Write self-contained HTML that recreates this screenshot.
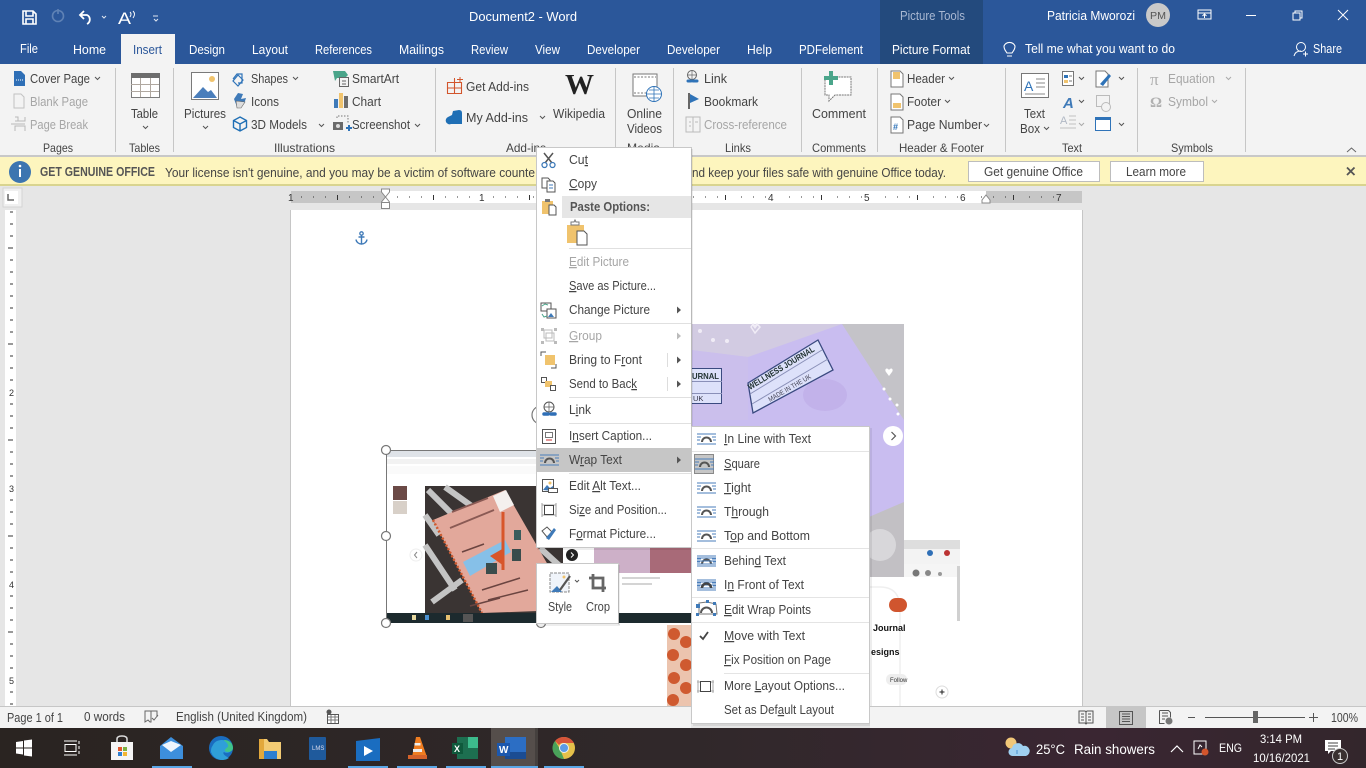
<!DOCTYPE html>
<html lang="en"><head><meta charset="utf-8"><title>Document2 - Word</title>
<style>
html,body{margin:0;padding:0;width:1366px;height:768px;overflow:hidden;background:#e6e6e6}
svg{display:block;font-family:"Liberation Sans",sans-serif;font-size:12.5px}
text{fill:#444}
.w text,text.w{fill:#fff}
.g text,text.g{fill:#a6a6a6}
.u{text-decoration:underline}
</style></head><body>
<svg width="1366" height="768" viewBox="0 0 1366 768" xmlns="http://www.w3.org/2000/svg">
<defs>
<linearGradient id="tb" x1="0" x2="1" y1="0" y2="0"><stop offset="0" stop-color="#2a2421"/><stop offset=".5" stop-color="#30282a"/><stop offset=".8" stop-color="#3a2632"/><stop offset="1" stop-color="#33262c"/></linearGradient>
<g id="wrap"><path d="M0 1h19M0 11h19" stroke="#4a7ebb" fill="none"/><path d="M0 4h4M15 4h4M0 7h3M16 7h3" stroke="#4a7ebb" fill="none"/><path d="M5 9a4.500 4.500 0 0 1 9 0" fill="none" stroke="#555" stroke-width="2"/></g>
</defs>

<!-- title bar -->
<rect width="1366" height="64" fill="#2b579a"/>
<rect x="880" width="103" height="64" fill="#234a7d"/>
<rect x="121" y="34" width="54" height="30" fill="#f3f3f3"/>
<path d="M23 11h10l3 3v10H23z M26 11v5h7v-5 M26 24v-5h7v5" fill="none" stroke="#fff" stroke-width="1.600"/>
<circle cx="58" cy="16" r="5.500" fill="none" stroke="#5f82b5" stroke-width="1.600"/><path d="M58 9v5" stroke="#5f82b5" stroke-width="1.600"/>
<path d="M84 11l-4 4 4 4M80 15h7a5 5 0 0 1 0 9" fill="none" stroke="#fff" stroke-width="1.800"/>
<path d="M102 16l2 2 2-2M153 16h5M154 19l2 2 2-2" fill="none" stroke="#dfe6f0"/>
<g class="w">
<text x="118" y="24" font-size="17" textLength="13" lengthAdjust="spacingAndGlyphs">A</text>
<path d="M130 12q2 2 0 5M133 11q3 3 0 7" fill="none" stroke="#fff"/>
<text x="469" y="21" textLength="108" lengthAdjust="spacingAndGlyphs">Document2  -  Word</text>
<text x="1047" y="20" textLength="88" lengthAdjust="spacingAndGlyphs">Patricia Mworozi</text>
<text x="20" y="53" textLength="18" lengthAdjust="spacingAndGlyphs">File</text>
<text x="73" y="54" textLength="33" lengthAdjust="spacingAndGlyphs">Home</text>
<text x="189" y="54" textLength="36" lengthAdjust="spacingAndGlyphs">Design</text>
<text x="252" y="54" textLength="36" lengthAdjust="spacingAndGlyphs">Layout</text>
<text x="315" y="54" textLength="57" lengthAdjust="spacingAndGlyphs">References</text>
<text x="399" y="54" textLength="45" lengthAdjust="spacingAndGlyphs">Mailings</text>
<text x="471" y="54" textLength="37" lengthAdjust="spacingAndGlyphs">Review</text>
<text x="535" y="54" textLength="25" lengthAdjust="spacingAndGlyphs">View</text>
<text x="587" y="54" textLength="53" lengthAdjust="spacingAndGlyphs">Developer</text>
<text x="667" y="54" textLength="53" lengthAdjust="spacingAndGlyphs">Developer</text>
<text x="747" y="54" textLength="25" lengthAdjust="spacingAndGlyphs">Help</text>
<text x="799" y="54" textLength="64" lengthAdjust="spacingAndGlyphs">PDFelement</text>
<text x="892" y="54" textLength="78" lengthAdjust="spacingAndGlyphs">Picture Format</text>
<text x="1025" y="53" textLength="150" lengthAdjust="spacingAndGlyphs">Tell me what you want to do</text>
<text x="1313" y="53" textLength="29" lengthAdjust="spacingAndGlyphs">Share</text>
</g>
<text x="133" y="54" textLength="29" lengthAdjust="spacingAndGlyphs" style="fill:#2b579a">Insert</text>
<text x="900" y="20" textLength="65" lengthAdjust="spacingAndGlyphs" style="fill:#a9b8d2">Picture Tools</text>
<circle cx="1158" cy="15" r="12" fill="#c9c9c9"/><text x="1150" y="19" font-size="10.500" textLength="16" lengthAdjust="spacingAndGlyphs" style="fill:#555">PM</text>
<path d="M1198 10h13v9h-13zM1198 13h13M1204.500 18v-4M1202.500 16l2-2 2 2" fill="none" stroke="#fff"/>
<path d="M1246 15.500h10" stroke="#fff"/>
<path d="M1293 13h7v7h-7zM1295 13v-2h7v7h-2" fill="none" stroke="#fff"/>
<path d="M1338 10l10 10M1348 10l-10 10" stroke="#fff"/>
<path d="M1007 53c-1-2-3-3-3-7a6 6 0 0 1 11 0c0 4-2 5-3 7zM1007 56h5" fill="none" stroke="#fff" stroke-width="1.100"/>
<circle cx="1301" cy="47" r="4.500" fill="none" stroke="#fff"/><path d="M1294 56c1-4 4-5 7-5M1303 54h5M1305.500 51.500v5" fill="none" stroke="#fff"/>

<!-- ribbon -->
<rect y="64" width="1366" height="92" fill="#f3f3f3"/>
<rect y="155" width="1366" height="2" fill="#c8c8c8"/>
<g stroke="#c6c6c6"><path d="M115.500 68v84M173.500 68v84M435.500 68v84M615.500 68v84M673.500 68v84M801.500 68v84M877.500 68v84M1005.500 68v84M1137.500 68v84M1245.500 68v84"/></g>
<g>
<text x="30" y="83" textLength="60" lengthAdjust="spacingAndGlyphs">Cover Page</text>
<text x="131" y="118" textLength="27" lengthAdjust="spacingAndGlyphs">Table</text>
<text x="184" y="118" textLength="42" lengthAdjust="spacingAndGlyphs">Pictures</text>
<text x="251" y="83" textLength="37" lengthAdjust="spacingAndGlyphs">Shapes</text>
<text x="251" y="106" textLength="28" lengthAdjust="spacingAndGlyphs">Icons</text>
<text x="251" y="129" textLength="56" lengthAdjust="spacingAndGlyphs">3D Models</text>
<text x="352" y="83" textLength="47" lengthAdjust="spacingAndGlyphs">SmartArt</text>
<text x="352" y="106" textLength="29" lengthAdjust="spacingAndGlyphs">Chart</text>
<text x="352" y="129" textLength="58" lengthAdjust="spacingAndGlyphs">Screenshot</text>
<text x="466" y="91" textLength="63" lengthAdjust="spacingAndGlyphs">Get Add-ins</text>
<text x="466" y="122" textLength="62" lengthAdjust="spacingAndGlyphs">My Add-ins</text>
<text x="553" y="118" textLength="52" lengthAdjust="spacingAndGlyphs">Wikipedia</text>
<text x="627" y="118" textLength="35" lengthAdjust="spacingAndGlyphs">Online</text>
<text x="627" y="133" textLength="35" lengthAdjust="spacingAndGlyphs">Videos</text>
<text x="704" y="83" textLength="23" lengthAdjust="spacingAndGlyphs">Link</text>
<text x="704" y="106" textLength="54" lengthAdjust="spacingAndGlyphs">Bookmark</text>
<text x="812" y="118" textLength="54" lengthAdjust="spacingAndGlyphs">Comment</text>
<text x="907" y="83" textLength="38" lengthAdjust="spacingAndGlyphs">Header</text>
<text x="907" y="106" textLength="34" lengthAdjust="spacingAndGlyphs">Footer</text>
<text x="907" y="129" textLength="75" lengthAdjust="spacingAndGlyphs">Page Number</text>
<text x="1024" y="118" textLength="21" lengthAdjust="spacingAndGlyphs">Text</text>
<text x="1020" y="133" textLength="20" lengthAdjust="spacingAndGlyphs">Box</text>
</g>
<g class="g">
<text x="30" y="106" textLength="58" lengthAdjust="spacingAndGlyphs">Blank Page</text>
<text x="30" y="129" textLength="58" lengthAdjust="spacingAndGlyphs">Page Break</text>
<text x="704" y="129" textLength="83" lengthAdjust="spacingAndGlyphs">Cross-reference</text>
<text x="1168" y="83" textLength="47" lengthAdjust="spacingAndGlyphs">Equation</text>
<text x="1168" y="106" textLength="40" lengthAdjust="spacingAndGlyphs">Symbol</text>
</g>
<g font-size="12">
<text x="43" y="152" textLength="30" lengthAdjust="spacingAndGlyphs">Pages</text>
<text x="129" y="152" textLength="31" lengthAdjust="spacingAndGlyphs">Tables</text>
<text x="274" y="152" textLength="61" lengthAdjust="spacingAndGlyphs">Illustrations</text>
<text x="506" y="152" textLength="40" lengthAdjust="spacingAndGlyphs">Add-ins</text>
<text x="627" y="152" textLength="33" lengthAdjust="spacingAndGlyphs">Media</text>
<text x="725" y="152" textLength="26" lengthAdjust="spacingAndGlyphs">Links</text>
<text x="812" y="152" textLength="54" lengthAdjust="spacingAndGlyphs">Comments</text>
<text x="899" y="152" textLength="85" lengthAdjust="spacingAndGlyphs">Header &amp; Footer</text>
<text x="1062" y="152" textLength="20" lengthAdjust="spacingAndGlyphs">Text</text>
<text x="1171" y="152" textLength="42" lengthAdjust="spacingAndGlyphs">Symbols</text>
</g>
<!-- ribbon chevrons -->
<path d="M95 77l2.500 2.500 2.500-2.500M143 126l2.500 2.500 2.500-2.500M203 126l2.500 2.500 2.500-2.500M293 77l2.500 2.500 2.500-2.500M319 124l2.500 2.500 2.500-2.500M415 124l2.500 2.500 2.500-2.500M540 116l2.500 2.500 2.500-2.500M949 77l2.500 2.500 2.500-2.500M945 100l2.500 2.500 2.500-2.500M984 124l2.500 2.500 2.500-2.500M1044 127l2.500 2.500 2.500-2.500M1079 77l2.500 2.500 2.500-2.500M1079 100l2.500 2.500 2.500-2.500M1119 77l2.500 2.500 2.500-2.500M1119 123l2.500 2.500 2.500-2.500" fill="none" stroke="#555"/>
<path d="M1079 123l2.500 2.500 2.500-2.500M1226 77l2.500 2.500 2.500-2.500M1212 100l2.500 2.500 2.500-2.500" fill="none" stroke="#aaa"/>
<path d="M1347 152l4.500-4 4.500 4" fill="none" stroke="#666"/>
<!-- ribbon icons -->
<path d="M14 71h7l4 4v11H14z" fill="#2f6fb6"/><path d="M16 80h7" stroke="#fff" stroke-dasharray="1 1"/>
<path d="M14 94h7l3 3v11H14z" fill="#f3f3f3" stroke="#c2c2c2"/>
<path d="M15 117h3v4M25 117v4h-10M25 131v-5H15v5M11 124h14" fill="none" stroke="#b8b8b8"/>
<rect x="131.500" y="73.500" width="28" height="24" fill="#fff" stroke="#7c7c7c"/><rect x="131" y="73" width="29" height="5" fill="#6d6d6d"/>
<path d="M131 84.500h28M131 91.500h28M140.500 78v19M150.500 78v19" stroke="#b0a8a0"/>
<rect x="191.500" y="72.500" width="27" height="27" fill="#fff" stroke="#7a7a7a"/>
<circle cx="212" cy="79" r="3" fill="#f0c36d"/><path d="M193 98l10-11 5 5 3-2 6 8z" fill="#4a7ebb"/>
<path d="M233 79l4-5 5 0v9h-4M238 75l5 5-5 6-5-5z" fill="none" stroke="#2f73b8" stroke-width="1.200"/>
<path d="M234 99l4-6 5 1-2 5 5-1-2 6-7 3z" fill="#3f7ab8"/><path d="M236 101l9 1-4 6h-4z" fill="#ddd" stroke="#666" stroke-width=".6"/>
<path d="M240 117l6.500 3.500v7L240 131l-6.500-3.500v-7zM233.500 120.500L240 124l6.500-3.500M240 124v7" fill="none" stroke="#1f6fb5" stroke-width="1.400"/>
<path d="M333 71h12l3 4-3 3h-8l-2 3z" fill="#4aa58a"/><rect x="339.500" y="77.500" width="9" height="9" fill="#f3f3f3" stroke="#666"/><path d="M342 81h4M342 84h4" stroke="#666"/>
<rect x="334" y="99" width="4" height="9" fill="#3f7ab8"/><rect x="339" y="93" width="4" height="15" fill="#f0c36d"/><rect x="344" y="96" width="4" height="12" fill="#6d6d6d"/>
<path d="M337 118v-2h11v7" fill="none" stroke="#777" stroke-dasharray="1.500 1.500"/><rect x="333" y="122" width="10" height="8" fill="#6a6a6a"/><circle cx="338" cy="126" r="2" fill="#ddd"/><path d="M346 128h6M349 125v6" stroke="#2f73b8" stroke-width="2"/>
<path d="M447.500 82.500h14v11h-14zM454.500 79v15M447.500 88h14" fill="none" stroke="#d2552c" stroke-width="1.100"/><path d="M457 79.500h6M460 77v5.500" stroke="#d2552c"/><rect x="454" y="78" width="1" height="4" fill="#d2552c"/>
<path d="M448 117l4-2 1-4 6-1q3 0 3 3v11h-11a3.500 3.500 0 0 1-3-7z" fill="#1f6fb5"/>
<text x="565" y="94" font-size="29" font-weight="bold" textLength="29" lengthAdjust="spacingAndGlyphs" style="fill:#222;font-family:'Liberation Serif',serif">W</text>
<rect x="633" y="74" width="24" height="22" fill="#fff" stroke="#777"/><path d="M634 77h22M634 93h22" stroke="#777" stroke-dasharray="2 1.500"/>
<circle cx="654" cy="94" r="7.500" fill="#fff" stroke="#2f73b8"/><path d="M647 94h15M654 87v15M649 90h10M649 98h10" stroke="#2f73b8" stroke-width=".8"/>
<circle cx="692" cy="75" r="4.500" fill="none" stroke="#666"/><path d="M687 75h10M692 71v8" stroke="#666" stroke-width=".7"/><path d="M688 81h3M693 81h4" stroke="#2f73b8" stroke-width="3" stroke-linecap="round"/>
<path d="M689 93v16" stroke="#666" stroke-width="2"/><path d="M690 94l9 5-9 4z" fill="#2f73b8"/>
<rect x="686" y="117" width="14" height="15" fill="none" stroke="#bbb"/><path d="M693 117v15M689 122h2M689 126h2M695 122h3" stroke="#bbb"/>
<path d="M825 77h26v18h-16l-6 6v-6h-4z" fill="#fff" stroke="#777" stroke-dasharray="2 .7"/><path d="M829 71h4v5h5v4h-5v5h-4v-5h-5v-4h5z" fill="#4aa58a"/>
<path d="M891 71h9l3 3v13h-12z" fill="#fff" stroke="#777"/><rect x="893" y="72" width="7" height="7" fill="#f0c36d"/>
<path d="M891 94h9l3 3v13h-12z" fill="#fff" stroke="#777"/><rect x="893" y="103" width="8" height="5" fill="#f0c36d"/>
<path d="M891 117h9l3 3v13h-12z" fill="#fff" stroke="#777"/><text x="893" y="130" font-size="9" style="fill:#2f73b8;font-weight:bold">#</text>
<rect x="1021.500" y="73.500" width="27" height="24" fill="#fff" stroke="#777"/><text x="1024" y="91" font-size="14" style="fill:#2f73b8">A</text><path d="M1036 79h9M1036 83h9M1036 87h9M1025 94h20" stroke="#888"/>
<rect x="1062.500" y="71.500" width="11" height="14" fill="#fff" stroke="#777"/><rect x="1064" y="75" width="4" height="3" fill="#2f73b8"/><rect x="1064" y="80" width="4" height="3" fill="#f0c36d"/><path d="M1069 76h3M1069 81h3" stroke="#777"/>
<text x="1063" y="108" font-size="15" font-style="italic" font-weight="bold" style="fill:#3f7ab8">A</text>
<text x="1060" y="124" font-size="11" style="fill:#b0b8c4">A</text><path d="M1069 116h7M1069 120h7M1069 124h7M1060 128h16" stroke="#c0c0c0"/>
<path d="M1096 71h9l3 3v13h-12z" fill="#fff" stroke="#777"/><path d="M1100 84l9-10 2 2-8 10z" fill="#2f73b8"/>
<rect x="1096.500" y="95.500" width="13" height="11" fill="none" stroke="#bbb"/><circle cx="1106" cy="107" r="4.500" fill="#f3f3f3" stroke="#bbb"/>
<rect x="1095.500" y="117.500" width="15" height="13" fill="#fff" stroke="#2f73b8"/><rect x="1095" y="117" width="16" height="3" fill="#2f73b8"/>
<text x="1150" y="85" font-size="17" style="fill:#b0b0b0;font-family:'Liberation Serif',serif">π</text>
<text x="1150" y="107" font-size="15" font-weight="bold" style="fill:#b0b0b0;font-family:'Liberation Serif',serif">Ω</text>

<!-- message bar -->
<rect y="157" width="1366" height="28" fill="#fdf5be"/>
<rect y="184" width="1366" height="2" fill="#d9d48f"/>
<circle cx="20" cy="172" r="11" fill="#3c75b0"/><path d="M20 169v8" stroke="#fff" stroke-width="2"/><circle cx="20" cy="166" r="1.300" fill="#fff"/>
<text x="40" y="176" textLength="115" lengthAdjust="spacingAndGlyphs" font-weight="bold" style="fill:#555">GET GENUINE OFFICE</text>
<text x="165" y="177" textLength="370" lengthAdjust="spacingAndGlyphs">Your license isn't genuine, and you may be a victim of software counte</text>
<text x="692" y="177" textLength="254" lengthAdjust="spacingAndGlyphs">nd keep your files safe with genuine Office today.</text>
<rect x="968.500" y="161.500" width="131" height="20" fill="#fff" stroke="#bdbdbd"/>
<text x="984" y="176" textLength="99" lengthAdjust="spacingAndGlyphs">Get genuine Office</text>
<rect x="1110.500" y="161.500" width="93" height="20" fill="#fff" stroke="#bdbdbd"/>
<text x="1126" y="176" textLength="60" lengthAdjust="spacingAndGlyphs">Learn more</text>
<path d="M1347 167.500l7.500 7.500M1354.500 167.500l-7.500 7.500" stroke="#555" stroke-width="1.800"/>

<!-- doc area -->
<rect y="186" width="1366" height="521" fill="#e6e6e6"/>
<rect x="291" y="210" width="791" height="497" fill="#fff"/>
<path d="M290.500 210v497M1082.500 210v497" stroke="#c6c6c6"/>
<!-- ruler -->
<rect x="3" y="188" width="19" height="19" fill="#f0f0f0" stroke="#d4d4d4"/><rect x="5" y="191" width="13" height="13" fill="#fff"/>
<path d="M8 194v6h6" fill="none" stroke="#666" stroke-width="1.500"/>
<rect x="291" y="191" width="94" height="12" fill="#c6c6c6"/>
<rect x="385" y="191" width="601" height="12" fill="#fff"/>
<rect x="986" y="191" width="96" height="12" fill="#c6c6c6"/>
<path d="M301 197h1M313 197h1M325 197h1M349 197h1M361 197h1M373 197h1M397 197h1M409 197h1M421 197h1M445 197h1M457 197h1M469 197h1M493 197h1M505 197h1M517 197h1M533 197h1M693 197h1M705 197h1M717 197h1M741 197h1M753 197h1M765 197h1M789 197h1M801 197h1M813 197h1M837 197h1M849 197h1M861 197h1M885 197h1M897 197h1M909 197h1M933 197h1M945 197h1M957 197h1M981 197h1M993 197h1M1005 197h1M1029 197h1M1041 197h1M1053 197h1" stroke="#333" fill="none"/>
<path d="M337.500 195v5M433.500 195v5M529.500 195v5M725.500 195v5M821.500 195v5M917.500 195v5M1013.500 195v5" stroke="#333"/>
<g font-size="10">
<text x="288" y="201" style="fill:#333">1</text><text x="479" y="201" style="fill:#333">1</text><text x="768" y="201" style="fill:#333">4</text><text x="864" y="201" style="fill:#333">5</text><text x="960" y="201" style="fill:#333">6</text><text x="1056" y="201" style="fill:#333">7</text>
</g>
<path d="M381.500 189h8v3l-4 5-4-5zM381.500 205v-3l4-5 4 5v3z" fill="#fff" stroke="#888"/><rect x="381.500" y="202.500" width="8" height="6" fill="#fff" stroke="#888"/>
<path d="M982 203v-3l4-5 4 5v3z" fill="#fff" stroke="#888"/>
<rect x="5" y="210" width="11" height="497" fill="#fff"/>
<path d="M10 212h3M10 224h3M10 236h3M10 260h3M10 272h3M10 284h3M10 296h3M10 308h3M10 320h3M10 332h3M10 344h3M10 356h3M10 368h3M10 380h3M10 404h3M10 416h3M10 428h3M10 440h3M10 452h3M10 464h3M10 476h3M10 500h3M10 512h3M10 524h3M10 536h3M10 548h3M10 560h3M10 572h3M10 596h3M10 608h3M10 620h3M10 632h3M10 644h3M10 656h3M10 668h3M10 692h3M10 704h3M8 248h5M8 344h5M8 440h5M8 536h5M8 632h5" stroke="#333" fill="none"/>
<g font-size="9"><text x="9" y="396" style="fill:#333">2</text><text x="9" y="492" style="fill:#333">3</text><text x="9" y="588" style="fill:#333">4</text><text x="9" y="684" style="fill:#333">5</text></g>
<!-- anchor -->
<circle cx="361.500" cy="233.500" r="1.700" fill="none" stroke="#3f7ab8" stroke-width="1.300"/><path d="M361.500 235v9M358.500 237h6M356 239.500c.5 3 3 4.500 5.500 4.500s5-1.500 5.500-4.500" fill="none" stroke="#3f7ab8" stroke-width="1.400"/>

<!-- purple image -->
<rect x="660" y="324" width="244" height="253" fill="#c9bdf0"/>
<polygon points="691,324 842,324 748,357 691,350" fill="#d2cbe2"/>
<polygon points="691,350 748,357 748,420 691,420" fill="#cbbfec"/>
<polygon points="842,324 904,324 904,420" fill="#c4c3c8"/>
<polygon points="904,502 904,577 800,577 780,555" fill="#c2c0c4"/>
<circle cx="880" cy="545" r="16" fill="#d8d7da"/>
<rect x="691" y="565" width="100" height="12" fill="#cfcbd6"/>
<ellipse cx="825" cy="395" rx="22" ry="16" fill="#c2b2ea"/>
<circle cx="700" cy="331" r="2" fill="#f0ecf6"/><circle cx="713" cy="340" r="2" fill="#f0ecf6"/><circle cx="727" cy="341" r="2" fill="#f0ecf6"/>
<path d="M752 325l3 4 3-4" fill="#f0ecf6"/><path d="M751 327l4 6 5-6-3-3-2 2-2-2z" fill="none" stroke="#f0ecf6" stroke-width="1.500"/>
<polygon points="748,383 818,340 833,370 753,413" fill="#dde1fa" stroke="#3a4a80" stroke-width="1.300"/>
<path d="M750 394l72-44M752 404l76-45" stroke="#8a90b8" fill="none"/>
<rect x="691.500" y="368.500" width="30" height="35" fill="#dde1fa" stroke="#3a4a80"/>
<path d="M691 381.500h31M691 393.500h31" stroke="#8a90b8"/>
<text x="692" y="379" font-size="8" font-weight="bold" textLength="27" lengthAdjust="spacingAndGlyphs" style="fill:#233">URNAL</text>
<text x="693" y="401" font-size="7.500" style="fill:#334">UK</text>
<text transform="translate(750,390) rotate(-31)" font-size="8.500" font-weight="bold" textLength="76" lengthAdjust="spacingAndGlyphs" style="fill:#233">WELLNESS JOURNAL</text>
<text transform="translate(759,392) rotate(-30)" font-size="5" style="fill:#445"></text>
<text transform="translate(770,402) rotate(-30)" font-size="7" textLength="48" lengthAdjust="spacingAndGlyphs" style="fill:#445">MADE IN THE UK</text>
<path d="M886 372l3 4 3-4c2-3-1-5-3-2-2-3-5-1-3 2z" fill="#fff"/>
<circle cx="884" cy="389" r="1.500" fill="#fff"/><circle cx="890" cy="399" r="1.500" fill="#fff"/><circle cx="897" cy="405" r="1.500" fill="#fff"/><circle cx="898" cy="414" r="1.500" fill="#fff"/>
<circle cx="893" cy="436" r="10" fill="#fff"/><path d="M891.500 432l4 4-4 4" fill="none" stroke="#555" stroke-width="1.200"/>

<!-- pinterest-like screenshot -->
<rect x="660" y="577" width="300" height="130" fill="#fff"/>
<rect x="904" y="540" width="56" height="37" fill="#fff"/>
<rect x="904" y="540" width="56" height="9" fill="#dedede"/>
<rect x="904" y="549" width="56" height="15" fill="#f3f3f3"/>
<rect x="904" y="564" width="56" height="13" fill="#f5f5f5"/>
<path d="M870 587h10q20 0 20 22v98" fill="none" stroke="#efefef" stroke-width="1.500"/>
<circle cx="916" cy="573" r="3.500" fill="#777"/><circle cx="928" cy="573" r="3" fill="#888"/><circle cx="940" cy="574" r="2" fill="#999"/><circle cx="947" cy="553" r="3" fill="#b33"/><circle cx="930" cy="553" r="3" fill="#2f6fb6"/>
<rect x="957" y="566" width="3" height="55" fill="#d0d0d0"/>
<rect x="889" y="598" width="18" height="14" rx="7" fill="#d0552e"/>
<text x="873" y="631" font-size="9" font-weight="bold" style="fill:#111">Journal</text>
<text x="871" y="655" font-size="9" font-weight="bold" style="fill:#111">esigns</text>
<rect x="886" y="674" width="21" height="11" rx="5" fill="#eee"/><text x="890" y="682" font-size="6" style="fill:#333">Follow</text>
<circle cx="942" cy="692" r="6" fill="#fff" stroke="#ddd"/><path d="M939.500 692h5M942 689.500v5" stroke="#222"/>
<!-- floral -->
<rect x="667" y="625" width="24" height="82" fill="#ecc4ae"/>
<g fill="#cf5a30"><circle cx="674" cy="634" r="6"/><circle cx="686" cy="642" r="6"/><circle cx="673" cy="655" r="6"/><circle cx="686" cy="665" r="6"/><circle cx="674" cy="678" r="6"/><circle cx="686" cy="688" r="6"/><circle cx="673" cy="700" r="6"/></g>

<!-- selected image -->
<rect x="386" y="450" width="305" height="173" fill="#fff"/>
<path d="M386.500 623V450.500H540" fill="none" stroke="#777"/>
<rect x="387" y="451" width="160" height="6" fill="#dfe3e8"/>
<rect x="387" y="459" width="160" height="5" fill="#f2f2f2"/>
<rect x="387" y="466" width="160" height="8" fill="#fafafa"/>
<rect x="393" y="486" width="14" height="14" fill="#6b4a46"/><rect x="393" y="501" width="14" height="13" fill="#d8d0c8"/>
<rect x="425" y="486" width="139" height="127" fill="#3a3433"/>
<path d="M428 490l30 30M445 487l28 20M425 515l14 20M425 545l30 45M432 602l30-22M540 548l22 20M520 600l42 6" stroke="#c4c4c4" stroke-width="6" fill="none"/>
<polygon points="433,520 505,490 548,565 566,610 482,613" fill="#e2a89b"/>
<path d="M433 520L482 613" stroke="#d05a2e" stroke-width="2.500" stroke-dasharray="2 2"/>
<polygon points="493,496 506,490 514,505 500,512" fill="#f4f0ee"/>
<path d="M452 512l36-14M450 528l44-18" stroke="#8a5a54" stroke-width="1.800"/>
<path d="M462 552l22-8M482 590l38-12M488 600l40-10M470 606l30-8" stroke="#6a4440" stroke-width="1.500"/>
<polygon points="463,562 505,540 511,552 470,576" fill="#86c0e8"/>
<rect x="486" y="563" width="11" height="11" fill="#3a4c4c"/><rect x="512" y="549" width="9" height="12" fill="#3a4c4c"/><rect x="514" y="530" width="7" height="10" fill="#3a5c5c"/>
<path d="M503 512v58" stroke="#d8552a" stroke-width="3"/><polygon points="490,556 504,548 504,566" fill="#d8552a"/>
<rect x="563" y="548" width="31" height="15" fill="#fff"/><circle cx="572" cy="555" r="6" fill="#222"/><path d="M571 552.500l2.500 2.500-2.500 2.500" stroke="#fff" fill="none"/>
<rect x="594" y="548" width="97" height="25" fill="#cdb0c8"/><rect x="650" y="548" width="41" height="25" fill="#a86a78"/>
<path d="M622 578h38M622 584h30" stroke="#aaa"/>
<circle cx="416" cy="555" r="6" fill="#fff" stroke="#eee"/><path d="M417 552l-2.500 3 2.500 3" fill="none" stroke="#888"/>
<rect x="387" y="613" width="304" height="10" fill="#1c2a2e"/>
<rect x="412" y="615" width="4" height="5" fill="#e6d8a0"/><rect x="425" y="615" width="4" height="5" fill="#4a90d0"/><rect x="446" y="615" width="4" height="5" fill="#e6c070"/><rect x="463" y="614" width="10" height="8" fill="#555"/>
<g fill="#fff" stroke="#777" stroke-width="1.200"><circle cx="386" cy="450" r="4.500"/><circle cx="386" cy="536" r="4.500"/><circle cx="386" cy="623" r="4.500"/><circle cx="541" cy="415" r="9"/><circle cx="541" cy="623" r="4.500"/></g>

<!-- context menu -->
<rect x="536.500" y="147.500" width="155" height="400" fill="#fff" stroke="#c8c8c8"/>
<rect x="691" y="149" width="2" height="399" fill="#000" opacity=".07"/><rect x="537" y="548" width="155" height="2" fill="#000" opacity=".07"/>
<rect x="562" y="196" width="129" height="22" fill="#e6e6e6"/>
<rect x="537" y="448" width="154" height="24" fill="#c6c6c6"/>
<path d="M569 248.500h122M569 323.500h122M569 397.500h122M569 423.500h122M569 473.500h122" stroke="#e0e0e0"/>
<g>
<text x="569" y="164" textLength="19" lengthAdjust="spacingAndGlyphs">Cu<tspan class="u">t</tspan></text>
<text x="569" y="188" textLength="28" lengthAdjust="spacingAndGlyphs"><tspan class="u">C</tspan>opy</text>
<text x="570" y="211" textLength="80" lengthAdjust="spacingAndGlyphs" font-weight="bold" style="fill:#555">Paste Options:</text>
<text x="569" y="290" textLength="87" lengthAdjust="spacingAndGlyphs"><tspan class="u">S</tspan>ave as Picture...</text>
<text x="569" y="314" textLength="81" lengthAdjust="spacingAndGlyphs">Chan<tspan class="u">g</tspan>e Picture</text>
<text x="569" y="364" textLength="73" lengthAdjust="spacingAndGlyphs">Bring to F<tspan class="u">r</tspan>ont</text>
<text x="569" y="388" textLength="68" lengthAdjust="spacingAndGlyphs">Send to Bac<tspan class="u">k</tspan></text>
<text x="569" y="414" textLength="22" lengthAdjust="spacingAndGlyphs">L<tspan class="u">i</tspan>nk</text>
<text x="569" y="440" textLength="83" lengthAdjust="spacingAndGlyphs">I<tspan class="u">n</tspan>sert Caption...</text>
<text x="569" y="464" textLength="53" lengthAdjust="spacingAndGlyphs">W<tspan class="u">r</tspan>ap Text</text>
<text x="569" y="490" textLength="72" lengthAdjust="spacingAndGlyphs">Edit <tspan class="u">A</tspan>lt Text...</text>
<text x="569" y="514" textLength="98" lengthAdjust="spacingAndGlyphs">Si<tspan class="u">z</tspan>e and Position...</text>
<text x="569" y="538" textLength="87" lengthAdjust="spacingAndGlyphs">F<tspan class="u">o</tspan>rmat Picture...</text>
</g>
<g class="g">
<text x="569" y="266" textLength="60" lengthAdjust="spacingAndGlyphs"><tspan class="u">E</tspan>dit Picture</text>
<text x="569" y="340" textLength="33" lengthAdjust="spacingAndGlyphs"><tspan class="u">G</tspan>roup</text>
</g>
<path d="M677 306.500l4 3.500-4 3.500zM677 356.500l4 3.500-4 3.500zM677 380.500l4 3.500-4 3.500zM677 456.500l4 3.500-4 3.500z" fill="#555"/>
<path d="M677 332.500l4 3.500-4 3.500z" fill="#bbb"/>
<path d="M667.500 353v14M667.500 377v14" stroke="#ddd"/>
<!-- menu icons -->
<path d="M544 153l8 10M553 153l-8 10" stroke="#555" stroke-width="1.500"/><circle cx="544.500" cy="165" r="2.500" fill="none" stroke="#3f7ab8" stroke-width="1.300"/><circle cx="552.500" cy="165" r="2.500" fill="none" stroke="#3f7ab8" stroke-width="1.300"/>
<path d="M542 178h6l2 2v8h-8z" fill="#fff" stroke="#555"/><path d="M547 181h6l2 2v9h-8z" fill="#fff" stroke="#555"/><path d="M549 185h4M549 188h4" stroke="#3f7ab8"/>
<rect x="542" y="201" width="11" height="13" fill="#f0c36d"/><rect x="545" y="199" width="5" height="3" fill="#777"/><path d="M549 205h5l2 2v8h-7z" fill="#fff" stroke="#555"/>
<rect x="567" y="225" width="17" height="18" fill="#f0c36d"/><path d="M571 225v-3h3l1-2 1 2h3v3z" fill="#fff" stroke="#777"/><path d="M577 231h7l3 3v11h-10z" fill="#fff" stroke="#555"/>
<rect x="541" y="303" width="10" height="8" fill="#fff" stroke="#555"/><rect x="547" y="309" width="9" height="9" fill="#fff" stroke="#555"/><path d="M548 317l3-4 3 4z" fill="#3f7ab8"/><path d="M542 306l3-2 3 1M542 314l2 3 3-1" stroke="#4aa58a" fill="none"/>
<g stroke="#bbb" fill="none"><rect x="544" y="330" width="8" height="8"/><rect x="546" y="333" width="8" height="8"/></g><path d="M541 328h3v3h-3zM554 328h3v3h-3zM541 341h3v3h-3zM554 341h3v3h-3z" fill="#bbb"/>
<rect x="545" y="355" width="10" height="10" fill="#f0c36d"/><path d="M541 356v-4h5M556 364v4h-5" stroke="#555" fill="none"/>
<rect x="541.500" y="377.500" width="5" height="5" fill="#fff" stroke="#555"/><rect x="545" y="381" width="7" height="6" fill="#f0c36d"/><rect x="550.500" y="385.500" width="5" height="5" fill="#fff" stroke="#555"/>
<circle cx="549" cy="407" r="5" fill="none" stroke="#555"/><path d="M544 407h10M549 402v10" stroke="#555" stroke-width=".7"/><path d="M544 414h4M551 414h4" stroke="#2f6fb6" stroke-width="3.500" stroke-linecap="round"/>
<rect x="542.500" y="429.500" width="13" height="14" fill="#fff" stroke="#555"/><rect x="545.500" y="432.500" width="7" height="5" fill="none" stroke="#777"/><path d="M546 440h6" stroke="#c33"/>
<use href="#wrap" x="540" y="454"/>
<rect x="542.500" y="479.500" width="11" height="12" fill="#fff" stroke="#555"/><path d="M543 490l4-5 3 3 3-2v5z" fill="#3f7ab8"/><circle cx="550" cy="483" r="1.500" fill="#f0c36d"/><rect x="548.500" y="488.500" width="9" height="4" fill="#fff" stroke="#555"/>
<path d="M542 503v14M556 503v14M542 505h14M542 515h14" stroke="#a0a0a0"/><rect x="544.500" y="505.500" width="9" height="9" fill="#fff" stroke="#444"/>
<path d="M542 531l5-4 5 5-5 5z" fill="#fff" stroke="#555"/><path d="M546 538l8-10 2 2-7 10z" fill="#3f7ab8"/>

<!-- mini toolbar -->
<rect x="536.500" y="563.500" width="82" height="60" fill="#fff" stroke="#c8c8c8"/>
<rect x="618" y="565" width="2" height="60" fill="#000" opacity=".07"/><rect x="538" y="624" width="82" height="2" fill="#000" opacity=".07"/>
<rect x="550" y="573" width="19" height="19" fill="#f0f4fa" stroke="#888" stroke-dasharray="3 1"/><path d="M551 592l6-6 5 6z" fill="#3f7ab8"/><circle cx="564" cy="577" r="1.500" fill="#f0c36d"/><path d="M560 590l10-14" stroke="#555" stroke-width="2.200"/>
<path d="M575 580l2 2 2-2" stroke="#555" fill="none"/>
<path d="M593 574v14h13M589 578h14v14" fill="none" stroke="#666" stroke-width="2.800"/>
<text x="548" y="611" textLength="24" lengthAdjust="spacingAndGlyphs">Style</text>
<text x="586" y="611" textLength="24" lengthAdjust="spacingAndGlyphs">Crop</text>

<!-- submenu -->
<rect x="691.500" y="426.500" width="178" height="297" fill="#fff" stroke="#c8c8c8"/>
<rect x="870" y="428" width="2" height="297" fill="#000" opacity=".07"/><rect x="693" y="724" width="178" height="2" fill="#000" opacity=".07"/>
<path d="M692 451.500h177M692 548.500h177M692 597.500h177M692 622.500h177M724 673.500h145" stroke="#e4e4e4"/>
<rect x="694.500" y="454.500" width="19" height="19" fill="#c6c6c6" stroke="#8a8a8a"/>
<use href="#wrap" x="697" y="433"/><use href="#wrap" x="695" y="458"/><use href="#wrap" x="697" y="482"/><use href="#wrap" x="697" y="506"/><use href="#wrap" x="697" y="530"/><use href="#wrap" x="697" y="555"/>
<use href="#wrap" x="697" y="579"/><path d="M697 582h19M697 585h19M697 588h19" stroke="#4a7ebb"/><path d="M702 588a4.500 4.500 0 0 1 9 0" fill="none" stroke="#444" stroke-width="2.500"/>
<path d="M697 558h19M697 561h19M697 564h19" stroke="#4a7ebb"/>
<path d="M699 603l8-1 9 2 1 10h-18z" fill="none" stroke="#777"/><path d="M701 613a5.500 5.500 0 0 1 11 0" fill="none" stroke="#555" stroke-width="2"/><path d="M696 604h4v4h-4zM706 600h3v3h-3zM713 602h3v3h-3zM696 613h3v3h-3zM713 613h3v3h-3z" fill="#3f7ab8"/>
<path d="M700 636l3 3 5-7" fill="none" stroke="#444" stroke-width="1.800"/>
<path d="M698 680v13M713 680v13M697 682h17M697 691h17" stroke="#aaa"/><rect x="700.500" y="681.500" width="10" height="10" fill="#fff" stroke="#444"/>
<g>
<text x="724" y="443" textLength="87" lengthAdjust="spacingAndGlyphs"><tspan class="u">I</tspan>n Line with Text</text>
<text x="724" y="468" textLength="36" lengthAdjust="spacingAndGlyphs"><tspan class="u">S</tspan>quare</text>
<text x="724" y="492" textLength="27" lengthAdjust="spacingAndGlyphs"><tspan class="u">T</tspan>ight</text>
<text x="724" y="516" textLength="45" lengthAdjust="spacingAndGlyphs">T<tspan class="u">h</tspan>rough</text>
<text x="724" y="540" textLength="86" lengthAdjust="spacingAndGlyphs">T<tspan class="u">o</tspan>p and Bottom</text>
<text x="724" y="565" textLength="62" lengthAdjust="spacingAndGlyphs">Behin<tspan class="u">d</tspan> Text</text>
<text x="724" y="589" textLength="80" lengthAdjust="spacingAndGlyphs">I<tspan class="u">n</tspan> Front of Text</text>
<text x="724" y="614" textLength="87" lengthAdjust="spacingAndGlyphs"><tspan class="u">E</tspan>dit Wrap Points</text>
<text x="724" y="640" textLength="81" lengthAdjust="spacingAndGlyphs"><tspan class="u">M</tspan>ove with Text</text>
<text x="724" y="664" textLength="107" lengthAdjust="spacingAndGlyphs"><tspan class="u">F</tspan>ix Position on Page</text>
<text x="724" y="690" textLength="121" lengthAdjust="spacingAndGlyphs">More <tspan class="u">L</tspan>ayout Options...</text>
<text x="724" y="714" textLength="110" lengthAdjust="spacingAndGlyphs">Set as Def<tspan class="u">a</tspan>ult Layout</text>
</g>

<!-- status bar -->
<rect y="707" width="691" height="21" fill="#f3f3f3"/><rect x="870" y="707" width="496" height="21" fill="#f3f3f3"/>
<path d="M0 706.500h691M870 706.500h496" stroke="#c6c6c6"/>
<rect x="1106" y="707" width="40" height="21" fill="#c6c6c6"/>
<text x="7" y="722" textLength="56" lengthAdjust="spacingAndGlyphs">Page 1 of 1</text>
<text x="84" y="721" textLength="41" lengthAdjust="spacingAndGlyphs">0 words</text>
<text x="176" y="721" textLength="131" lengthAdjust="spacingAndGlyphs">English (United Kingdom)</text>
<text x="1331" y="722" textLength="27" lengthAdjust="spacingAndGlyphs">100%</text>
<path d="M145 711h6v11h-1l-2-2-3 2zM151 711h6v6" fill="none" stroke="#666"/><path d="M152 718l2 2 4-5" fill="none" stroke="#666"/>
<circle cx="329" cy="712" r="2.500" fill="#555"/><rect x="327.500" y="714.500" width="11" height="9" fill="#fff" stroke="#555"/><path d="M328 717h10M328 720h10M331 715v8M335 715v8" stroke="#777"/>
<path d="M1079 711h6l1 1 1-1h6v12h-6l-1 1-1-1h-6zM1086 712v12M1081 714h3M1081 717h3M1081 720h3M1088 714h3M1088 717h3M1088 720h3" fill="none" stroke="#555"/>
<rect x="1119.500" y="711.500" width="13" height="13" fill="none" stroke="#555"/><path d="M1122 714h8M1122 716.500h8M1122 719h8M1122 721.500h8" stroke="#555"/>
<path d="M1159.500 710.500h9l2 2v5M1159.500 710.500v13h5M1162 713h6M1162 716h6M1162 719h3" fill="none" stroke="#555"/><circle cx="1169" cy="721" r="3.500" fill="#777"/>
<path d="M1188 717.500h7M1205 717.500h100M1309 717.500h9M1313.500 713v9" stroke="#555" fill="none"/>
<rect x="1253" y="711" width="5" height="12" fill="#666"/>

<!-- taskbar -->
<rect y="728" width="1366" height="40" fill="url(#tb)"/>
<rect x="491" y="728" width="47" height="40" fill="#554e4b"/>
<rect x="535" y="728" width="3" height="40" fill="#45403e"/>
<g fill="#5aa7e6"><rect x="152" y="766" width="40" height="2"/><rect x="348" y="766" width="40" height="2"/><rect x="397" y="766" width="40" height="2"/><rect x="446" y="766" width="40" height="2"/><rect x="491" y="766" width="47" height="2"/><rect x="544" y="766" width="40" height="2"/></g>
<path d="M16 742l7-1v6.500h-7zM24 740.500l8-1v8h-8zM16 748.500h7v6l-7-1zM24 748.500h8v8l-8-1z" fill="#fff"/>
<path d="M64 741h13M65 744.500h11v7H65zM64 755h13M79 741v3M79 746v3M79 751v3" fill="none" stroke="#fff"/>
<path d="M111 742h22v18h-22z" fill="#f5f5f5"/><path d="M117 742v-3q0-3 5-3t5 3v3" fill="none" stroke="#ddd" stroke-width="1.500"/>
<rect x="118" y="747" width="4" height="4" fill="#e2572c"/><rect x="123" y="747" width="4" height="4" fill="#7cb342"/><rect x="118" y="752" width="4" height="4" fill="#2f7fd0"/><rect x="123" y="752" width="4" height="4" fill="#f2b632"/>
<path d="M160 746l11-9 12 9v13h-23z" fill="#3d8fdc"/><path d="M162 745l9 7 10-7-10-4z" fill="#eef5fc"/>
<circle cx="221" cy="748" r="12" fill="#1a6dc0"/><path d="M213 745c3-7 16-7 19 2 1 5-5 7-8 5-3 2 5 6 5 6a12 12 0 0 1 -18-6c0-5 1-5 2-7z" fill="#2f9fd8"/><path d="M224 740c5 0 9 3 9 8 0 4-6 5-8 3-1-3 4-3 3-6-1-3-4-4-4-5z" fill="#3fc48a"/>
<path d="M259 739h8l2 3h12v17h-22z" fill="#f2cb74"/><rect x="263" y="751" width="14" height="8" fill="#2f7fd0"/><rect x="259" y="739" width="5" height="20" fill="#e2a83c"/>
<rect x="309" y="737" width="17" height="23" rx="1" fill="#1f5a9c"/><text x="312" y="750" font-size="6" style="fill:#dde">LMS</text>
<path d="M356 741l24-3v23h-24z" fill="#1a6dc0"/><path d="M364 746l9 5-9 5z" fill="#fff"/>
<path d="M416 737l4 0 7 20h-15z" fill="#ef7d21"/><path d="M413 749h9v3h-9zM414.500 743h6v2.500h-6z" fill="#eee"/><rect x="408" y="755" width="19" height="4" fill="#d5622a"/>
<rect x="457" y="737" width="21" height="22" fill="#1d6f50"/><rect x="468" y="737" width="10" height="11" fill="#3dbb8c"/><rect x="452" y="743" width="11" height="11" fill="#0f5a3c"/><text x="454" y="752" font-size="9" font-weight="bold" style="fill:#fff">X</text>
<rect x="505" y="737" width="21" height="22" fill="#2c6ec4"/><rect x="505" y="752" width="21" height="7" fill="#1b4c92"/><rect x="497" y="743" width="13" height="13" fill="#1c58ae"/><text x="499" y="753" font-size="10" font-weight="bold" style="fill:#fff">W</text>
<circle cx="564" cy="748" r="11" fill="#e5c04a"/><path d="M564 737a11 11 0 0 1 10 6h-10a5 5 0 0 0-5 2l-4-4a11 11 0 0 1 9-4z" fill="#d6553a"/><path d="M555 741l5 8 4 10a11 11 0 0 1-9-18z" fill="#4aa25a"/><circle cx="564" cy="748" r="4.500" fill="#5b9ce6" stroke="#eee"/>
<!-- tray -->
<circle cx="1011" cy="743" r="5.500" fill="#f1c778"/><path d="M1013 756a4 4 0 0 1-1-8 6 6 0 0 1 11-2 5 5 0 0 1 3 10z" fill="#9fd0f0"/><path d="M1017 750v4" stroke="#4a90d0"/>
<g class="w">
<text x="1036" y="754" font-size="13.500" textLength="29" lengthAdjust="spacingAndGlyphs">25°C</text>
<text x="1074" y="754" font-size="13.500" textLength="81" lengthAdjust="spacingAndGlyphs">Rain showers</text>
<text x="1219" y="752" font-size="12" textLength="23" lengthAdjust="spacingAndGlyphs">ENG</text>
<text x="1260" y="743" font-size="12" textLength="42" lengthAdjust="spacingAndGlyphs">3:14 PM</text>
<text x="1253" y="762" font-size="12" textLength="57" lengthAdjust="spacingAndGlyphs">10/16/2021</text>
</g>
<path d="M1171 752l6-6 6 6" fill="none" stroke="#fff" stroke-width="1.200"/>
<path d="M1194 741h12v13h-12z" fill="none" stroke="#fff"/><path d="M1198 749l2-4 2 2" fill="none" stroke="#fff"/><circle cx="1205" cy="752" r="3.500" fill="#d2552c"/>
<path d="M1325 740h16v11h-10l-3 3v-3h-3z" fill="#fff"/><path d="M1328 743h10M1328 746h10M1328 749h7" stroke="#444"/>
<circle cx="1340" cy="756" r="7.500" fill="#3a3030" stroke="#ccc"/><text x="1337" y="760" font-size="11" style="fill:#fff">1</text>
</svg>
</body></html>
